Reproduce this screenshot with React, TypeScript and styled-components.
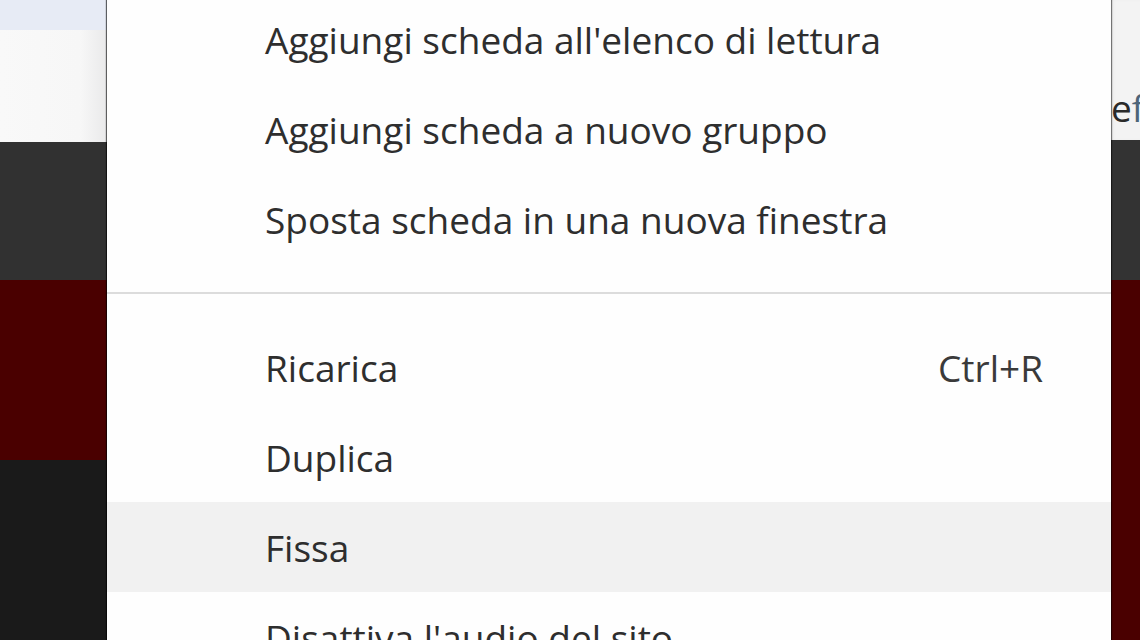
import React from 'react';
import styled, {createGlobalStyle} from 'styled-components';

const GlobalStyle = createGlobalStyle`
    html, body {
        margin: 0;
        padding: 0;
        width: 1140px;
        height: 640px;
        overflow: hidden;
        background: #ffffff;
    }
`

type BandProps = {
    h: number
    bg: string
}

type RowProps = {
    active?: boolean
}

const Page = styled.div`
    display: flex;
    width: 1140px;
    height: 640px;
    overflow: hidden;
    font-family: "Open Sans", "Noto Sans", sans-serif;
`

const Strip = styled.div<{w: number}>`
    display: flex;
    flex-direction: column;
    width: ${props => props.w}px;
    flex-shrink: 0;
`

const Band = styled.div<BandProps>`
    height: ${props => props.h}px;
    flex-shrink: 0;
    background: ${props => props.bg};
`

const LightBand = styled(Band)`
    background: linear-gradient(to right, #f9f9f9 0%, #f7f7f7 75%, #e9e9ea 100%);
`

const RightTop = styled(Band)`
    display: flex;
    align-items: flex-start;
    padding-top: 82px;
    box-sizing: border-box;
    overflow: hidden;
    font-size: 37px;
    color: #2a2a2a;
    box-shadow: inset 3px 0 4px -2px rgba(0, 0, 0, 0.08);
`

const BlueF = styled.span`
    color: #4d6478;
`

const Menu = styled.div`
    flex: 1;
    display: flex;
    flex-direction: column;
    background: #fefefe;
    margin-top: -6px;
    box-shadow: -1px 0 1px rgba(0, 0, 0, 0.6), 1px 0 1px rgba(0, 0, 0, 0.5);
    position: relative;
    z-index: 1;
`

const Row = styled.div<RowProps>`
    display: flex;
    align-items: center;
    justify-content: space-between;
    height: 90px;
    flex-shrink: 0;
    padding: 0 68px 0 158px;
    font-size: 37px;
    color: #2e2e2e;
    background: ${props => props.active ? '#f1f1f1' : 'transparent'};
    white-space: nowrap;
`

const Shortcut = styled.span`
    color: #3a3a3a;
`

const Separator = styled.div`
    height: 58px;
    flex-shrink: 0;
    display: flex;
    align-items: center;

    &::after {
        content: '';
        display: block;
        width: 100%;
        height: 2px;
        background: #dcdcdc;
    }
`

const topItems = [
    "Aggiungi scheda all'elenco di lettura",
    'Aggiungi scheda a nuovo gruppo',
    'Sposta scheda in una nuova finestra',
]

const bottomItems = [
    {label: 'Ricarica', shortcut: 'Ctrl+R'},
    {label: 'Duplica'},
    {label: 'Fissa', active: true},
    {label: "Disattiva l'audio del sito"},
]

export default function App() {
    return (
        <>
            <GlobalStyle/>
            <Page>
                <Strip w={107}>
                    <Band h={30} bg="#e7ebf5"/>
                    <LightBand h={112} bg="#f8f8f8"/>
                    <Band h={138} bg="#313131"/>
                    <Band h={180} bg="#4a0000"/>
                    <Band h={180} bg="#1a1a1a"/>
                </Strip>
                <Menu>
                    {topItems.map(item => (
                        <Row key={item}>{item}</Row>
                    ))}
                    <Separator/>
                    {bottomItems.map(item => (
                        <Row key={item.label} active={item.active}>
                            <span>{item.label}</span>
                            {item.shortcut && <Shortcut>{item.shortcut}</Shortcut>}
                        </Row>
                    ))}
                </Menu>
                <Strip w={29}>
                    <RightTop h={140} bg="#f3f3f3">e<BlueF>f</BlueF></RightTop>
                    <Band h={140} bg="#333333"/>
                    <Band h={360} bg="#4a0000"/>
                </Strip>
            </Page>
        </>
    );
}
